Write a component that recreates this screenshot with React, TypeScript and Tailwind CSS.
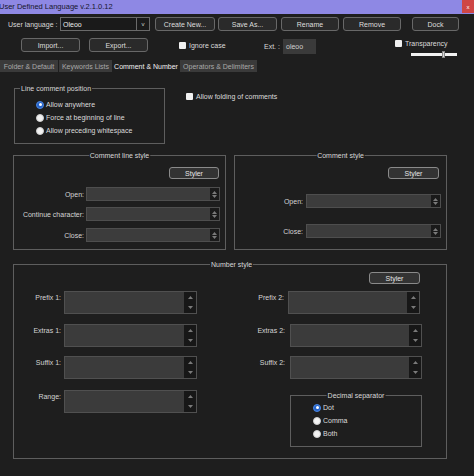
import React from "react";

function Tri({ up }: { up?: boolean }) {
  return (
    <svg width="5" height="3" viewBox="0 0 5 3" className="block">
      {up ? <polygon points="0,3 5,3 2.5,0" fill="#7a7a7a" /> : <polygon points="0,0 5,0 2.5,3" fill="#7a7a7a" />}
    </svg>
  );
}

function Btn({ label, cls }: { label: string; cls: string }) {
  return (
    <div className={`h-[14px] flex items-center justify-center bg-[#2a2a2a] border border-[#686868] rounded-[3px] text-[#dedede] ${cls}`}>
      {label}
    </div>
  );
}

function Styler({ cls }: { cls: string }) {
  return (
    <div className={`h-[12px] flex items-center justify-center bg-[#333333] border border-[#8a8a8a] rounded-[3px] text-[#e6e6e6] ${cls}`}>
      Styler
    </div>
  );
}

function SmallSpin({ cls }: { cls: string }) {
  return (
    <div className={`h-[14px] flex bg-[#3c3c3c] border border-[#4e4e4e] ${cls}`}>
      <div className="flex-1" />
      <div className="w-[9px] bg-[#1a1a1a] flex flex-col items-center justify-center gap-[1px]">
        <Tri up />
        <Tri />
      </div>
    </div>
  );
}

function BigSpin({ cls }: { cls: string }) {
  return (
    <div className={`h-[23px] flex bg-[#3b3b3b] border border-[#505050] ${cls}`}>
      <div className="flex-1" />
      <div className="w-[12px] bg-[#171717] flex flex-col items-center justify-between py-[4px]">
        <Tri up />
        <Tri />
      </div>
    </div>
  );
}

function Radio({ checked, label }: { checked?: boolean; label: string }) {
  return (
    <div className="h-[13px] flex items-center">
      {checked ? (
        <div className="w-[8px] h-[8px] rounded-full bg-[#2563c9] border border-[#4a86e0] flex items-center justify-center">
          <div className="w-[3px] h-[3px] rounded-full bg-white" />
        </div>
      ) : (
        <div className="w-[8px] h-[8px] rounded-full bg-[#f2f2f2] border border-[#cfcfcf]" />
      )}
      <span className="ml-[2px] text-[#dcdcdc]">{label}</span>
    </div>
  );
}

function Check({ label, cls }: { label: string; cls: string }) {
  return (
    <div className={`flex items-center ${cls}`}>
      <div className="w-[7px] h-[7px] bg-[#f0f0f0] rounded-[1px]" />
      <span className="ml-[3px] text-[#dcdcdc]">{label}</span>
    </div>
  );
}

export default function App() {
  return (
    <div className="w-[474px] h-[476px] bg-[#1e1e1e] overflow-hidden flex flex-col font-['Liberation_Sans',Arial,sans-serif] text-[7px] leading-none text-[#d4d4d4]">
      {/* title bar */}
      <div className="h-[14px] shrink-0 bg-[#8e88e4] flex items-start justify-between">
        <span className="text-[7.5px] leading-[13px] text-[#16162c] -ml-[1px]">User Defined Language v.2.1.0.12</span>
        <div className="w-[12px] h-[13px] bg-[#cf4646] flex items-center justify-center text-white text-[6px]">x</div>
      </div>

      {/* row 1 */}
      <div className="mt-[3px] h-[14px] shrink-0 flex items-center">
        <span className="ml-[8px] w-[52px] text-[#d8d8d8]">User language :</span>
        <div className="w-[90px] h-[14px] flex bg-[#1a1a1a] border border-[#6a6a6a]">
          <span className="flex-1 pl-[2px] flex items-center text-[#ececec]">Oleoo</span>
          <span className="w-[13px] border-l border-[#6a6a6a] flex items-center justify-center text-[6px] text-[#cfcfcf]">v</span>
        </div>
        <Btn label="Create New..." cls="ml-[5px] w-[60px]" />
        <Btn label="Save As..." cls="ml-[3px] w-[59px]" />
        <Btn label="Rename" cls="ml-[4px] w-[58px]" />
        <Btn label="Remove" cls="ml-[4px] w-[58px]" />
        <Btn label="Dock" cls="ml-[11px] w-[47px]" />
      </div>

      {/* row 2 */}
      <div className="mt-[7px] h-[22px] shrink-0 flex items-start">
        <Btn label="Import..." cls="ml-[21px] w-[59px]" />
        <Btn label="Export..." cls="ml-[9px] w-[59px]" />
        <Check label="Ignore case" cls="ml-[31px] w-[85px] mt-[4px] h-[7px]" />
        <div className="w-[53px] flex items-center mt-[1px]">
          <span className="w-[19px] text-[#d8d8d8]">Ext. :</span>
          <div className="w-[33px] h-[15px] bg-[#3a3a3a] flex items-center pl-[3px] text-[#d0d0d0]">oleoo</div>
        </div>
        <div className="ml-[78px] flex flex-col">
          <Check label="Transparency" cls="mt-[2px] h-[7px]" />
          <div className="ml-[16px] mt-[4px] w-[46px] h-[7px] flex items-center">
            <div className="relative w-full h-[3px] bg-[#f2f2f2]">
              <div className="absolute left-[31px] -top-[2px] w-[3px] h-[7px] bg-[#d8d8d8] border border-[#888]" />
            </div>
          </div>
        </div>
      </div>

      {/* tabs */}
      <div className="h-[12px] shrink-0 flex">
        <div className="w-[58px] bg-[#3a3a3a] flex items-center justify-center text-[#a9a9a9]">Folder &amp; Default</div>
        <div className="ml-[1px] w-[53px] bg-[#3a3a3a] flex items-center justify-center text-[#a9a9a9]">Keywords Lists</div>
        <div className="w-[68px] flex items-center justify-center text-[#f0f0f0]">Comment &amp; Number</div>
        <div className="w-[77px] bg-[#3a3a3a] flex items-center justify-center text-[#a9a9a9]">Operators &amp; Delimiters</div>
      </div>

      {/* line comment position */}
      <div className="mt-[16px] shrink-0 flex items-start">
        <div className="ml-[14px] relative w-[151px] h-[56px] border border-[#5e5e5e] pt-[9px] pl-[21px]">
          <span className="absolute left-[5px] -top-[4px] px-[1px] bg-[#1e1e1e] text-[#d8d8d8]">Line comment position</span>
          <Radio checked label="Allow anywhere" />
          <Radio label="Force at beginning of line" />
          <Radio label="Allow preceding whitespace" />
        </div>
        <Check label="Allow folding of comments" cls="ml-[21px] mt-[5px] h-[7px]" />
      </div>

      {/* comment groups */}
      <div className="mt-[11px] shrink-0 flex ml-[13px] gap-[8px]">
        <div className="relative w-[213px] h-[95px] border border-[#5e5e5e] flex flex-col">
          <span className="absolute left-1/2 -translate-x-1/2 -top-[4px] px-[1px] bg-[#1e1e1e] text-[#d8d8d8]">Comment line style</span>
          <div className="mt-[11px] flex justify-end pr-[6px]">
            <Styler cls="w-[50px]" />
          </div>
          <div className="mt-[8px] flex items-center">
            <span className="w-[72px] text-right pr-[2px]">Open:</span>
            <SmallSpin cls="w-[134px]" />
          </div>
          <div className="mt-[6px] flex items-center">
            <span className="w-[72px] text-right pr-[2px]">Continue character:</span>
            <SmallSpin cls="w-[134px]" />
          </div>
          <div className="mt-[7px] flex items-center">
            <span className="w-[72px] text-right pr-[2px]">Close:</span>
            <SmallSpin cls="w-[134px]" />
          </div>
        </div>

        <div className="relative w-[213px] h-[95px] border border-[#5e5e5e] flex flex-col">
          <span className="absolute left-1/2 -translate-x-1/2 -top-[4px] px-[1px] bg-[#1e1e1e] text-[#d8d8d8]">Comment style</span>
          <div className="mt-[11px] flex justify-end pr-[7px]">
            <Styler cls="w-[51px]" />
          </div>
          <div className="mt-[15px] flex items-center">
            <span className="w-[71px] text-right pr-[3px]">Open:</span>
            <SmallSpin cls="w-[135px]" />
          </div>
          <div className="mt-[16px] flex items-center">
            <span className="w-[71px] text-right pr-[3px]">Close:</span>
            <SmallSpin cls="w-[135px]" />
          </div>
        </div>
      </div>

      {/* number style */}
      <div className="mt-[14px] ml-[13px] shrink-0 relative w-[434px] h-[195px] border border-[#5e5e5e] flex flex-col">
        <span className="absolute left-[196px] -top-[4px] px-[1px] bg-[#1e1e1e] text-[#d8d8d8]">Number style</span>
        <div className="mt-[7px] flex justify-end pr-[26px]">
          <Styler cls="w-[51px]" />
        </div>
        <div className="mt-[7px] flex items-start">
          <span className="w-[50px] text-right pr-[3px] pt-[3px]">Prefix 1:</span>
          <BigSpin cls="w-[133px]" />
          <span className="w-[91px] text-right pr-[4px] pt-[3px]">Prefix 2:</span>
          <BigSpin cls="w-[132px]" />
        </div>
        <div className="mt-[10px] flex items-start">
          <span className="w-[50px] text-right pr-[3px] pt-[3px]">Extras 1:</span>
          <BigSpin cls="w-[133px]" />
          <span className="w-[93px] text-right pr-[5px] pt-[3px]">Extras 2:</span>
          <BigSpin cls="w-[132px]" />
        </div>
        <div className="mt-[9px] flex items-start">
          <span className="w-[50px] text-right pr-[3px] pt-[3px]">Suffix 1:</span>
          <BigSpin cls="w-[133px]" />
          <span className="w-[93px] text-right pr-[5px] pt-[3px]">Suffix 2:</span>
          <BigSpin cls="w-[132px]" />
        </div>
        <div className="mt-[11px] flex items-start">
          <span className="w-[50px] text-right pr-[3px] pt-[3px]">Range:</span>
          <BigSpin cls="w-[133px]" />
          <div className="ml-[93px] mt-[5px] relative w-[132px] h-[52px] border border-[#5e5e5e] pt-[5px] pl-[22px]">
            <span className="absolute left-1/2 -translate-x-1/2 -top-[4px] px-[1px] bg-[#1e1e1e] text-[#d8d8d8] whitespace-nowrap">Decimal separator</span>
            <Radio checked label="Dot" />
            <Radio label="Comma" />
            <Radio label="Both" />
          </div>
        </div>
      </div>
    </div>
  );
}
